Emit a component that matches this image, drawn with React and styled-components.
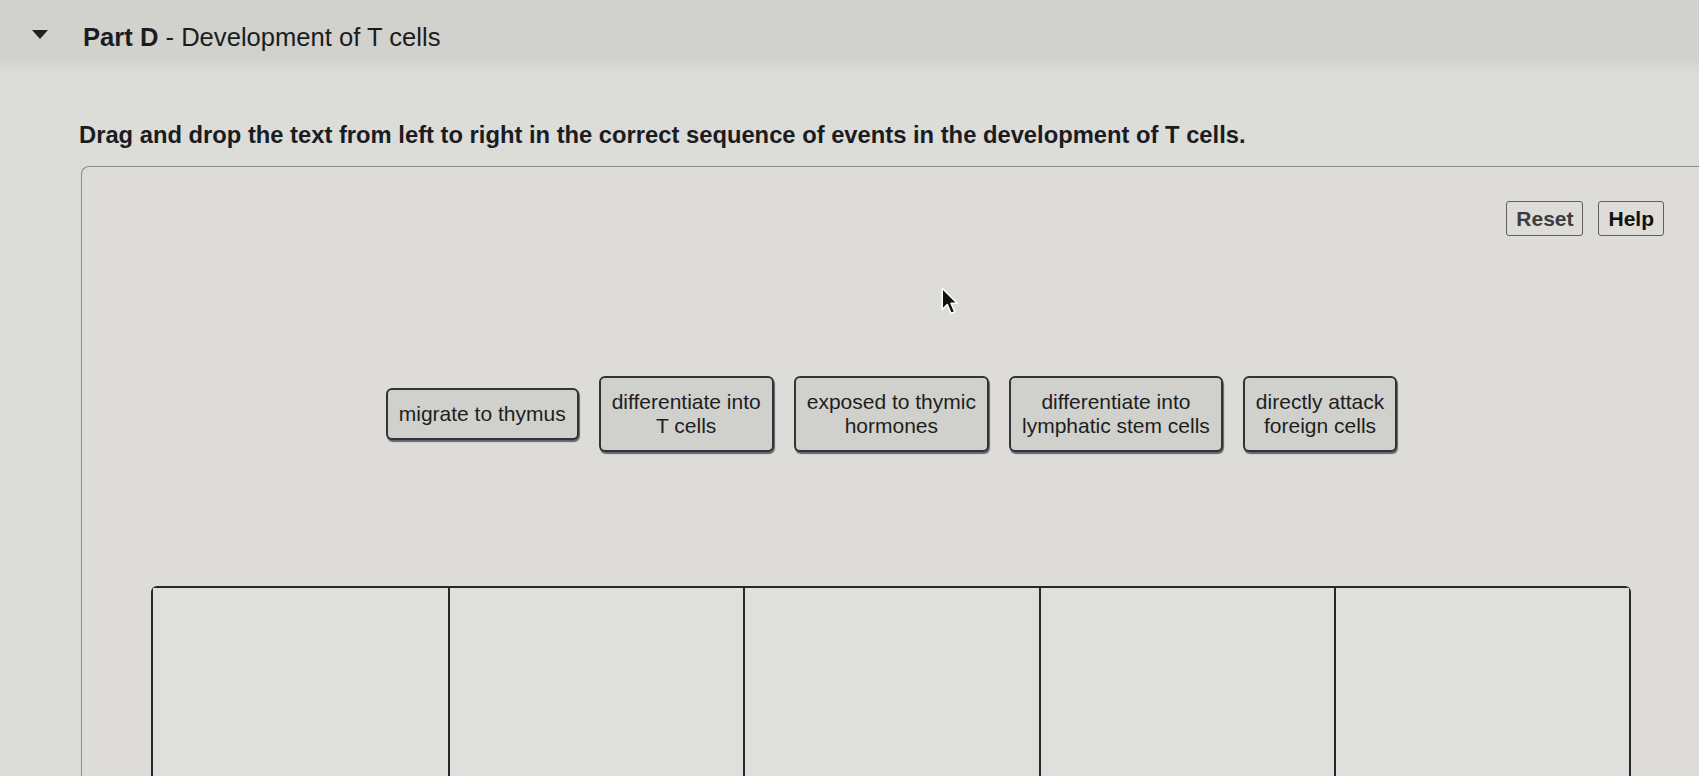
import React from 'react'
import styled, { createGlobalStyle } from 'styled-components'

const GlobalStyle = createGlobalStyle`
  html, body {
    margin: 0;
    padding: 0;
    overflow: hidden;
    background: #dcdcd8;
    font-family: "Liberation Sans", Arial, sans-serif;
  }
`

const Page = styled.div`
  width: 100%;
  min-height: 776px;
`

const PartHeader = styled.div`
  display: flex;
  align-items: center;
  height: 74px;
  padding-left: 32px;
  background: linear-gradient(to bottom, #d1d1cd 0%, #d1d1cd 80%, #dcdcd8 100%);
  box-sizing: border-box;
`

const Caret = styled.span`
  width: 0;
  height: 0;
  border-left: 8px solid transparent;
  border-right: 8px solid transparent;
  border-top: 9px solid #222;
  margin-right: 35px;
  margin-top: -6px;
`

const PartTitle = styled.h2`
  margin: 0;
  font-size: 25.6px;
  font-weight: 400;
  color: #1c1c1c;
  b {
    font-weight: 700;
  }
`

const Prompt = styled.p`
  margin: 47px 0 0 79px;
  font-size: 23.75px;
  line-height: 28px;
  font-weight: 700;
  color: #1b1b22;
`

const Panel = styled.div`
  position: relative;
  margin: 17px 0 0 81px;
  width: 1620px;
  border: 1.5px solid #8c8c8a;
  border-right: none;
  border-bottom: none;
  border-top-left-radius: 8px;
  padding: 34px 37px 0 0;
  box-sizing: border-box;
  background: #dddcd8;
`

const Toolbar = styled.div`
  display: flex;
  justify-content: flex-end;
  gap: 15px;
`

const ToolButton = styled.button`
  font-family: "Liberation Sans", Arial, sans-serif;
  font-size: 21px;
  font-weight: 700;
  line-height: 25px;
  padding: 4px 9px;
  background: transparent;
  border: 1.5px solid #5e5e5e;
  border-radius: 3px;
  color: ${p => (p.$strong ? '#111' : '#3c3c3c')};
`

const Pointer = styled.svg`
  position: absolute;
  left: 859px;
  top: 120px;
  width: 20px;
  height: 30px;
`

const TileRow = styled.div`
  display: flex;
  justify-content: center;
  align-items: center;
  gap: 20px;
  margin-top: 140px;
  padding-left: 37px;
`

const Tile = styled.div`
  font-size: 21px;
  line-height: 24px;
  color: #1e1e1e;
  text-align: center;
  background: #d0d0cc;
  border: 2px solid #33323b;
  border-radius: 6px;
  padding: 12px 11px 12px;
  box-shadow: 1px 2px 1px rgba(20, 20, 30, 0.6);
`

const DropTable = styled.div`
  display: grid;
  grid-template-columns: repeat(5, 1fr);
  width: 1480px;
  height: 200px;
  margin: 134px 0 0 69px;
  border: 2px solid #2a2630;
  border-bottom: none;
  border-radius: 6px 6px 0 0;
  box-sizing: border-box;
`

const DropCell = styled.div`
  border-left: ${p => (p.$first ? 'none' : '2px solid #2a2630')};
  background: #dfdfdb;
`

const tiles = [
  ['migrate to thymus'],
  ['differentiate into', 'T cells'],
  ['exposed to thymic', 'hormones'],
  ['differentiate into', 'lymphatic stem cells'],
  ['directly attack', 'foreign cells'],
]

export default function App() {
  return (
    <Page>
      <GlobalStyle />
      <PartHeader>
        <Caret />
        <PartTitle>
          <b>Part D</b> - Development of T cells
        </PartTitle>
      </PartHeader>
      <Prompt>
        Drag and drop the text from left to right in the correct sequence of events in the development of T cells.
      </Prompt>
      <Panel>
        <Toolbar>
          <ToolButton>Reset</ToolButton>
          <ToolButton $strong>Help</ToolButton>
        </Toolbar>
        <Pointer viewBox="0 0 16 24">
          <path d="M1 1 L1 18 L5 14 L8 21 L11 20 L8 13 L13 13 Z" fill="#111" stroke="#fff" strokeWidth="1.2" strokeLinejoin="round" />
        </Pointer>
        <TileRow>
          {tiles.map((lines, i) => (
            <Tile key={i}>
              {lines.map((l, j) => (
                <div key={j}>{l}</div>
              ))}
            </Tile>
          ))}
        </TileRow>
        <DropTable>
          {[0, 1, 2, 3, 4].map(i => (
            <DropCell key={i} $first={i === 0} />
          ))}
        </DropTable>
      </Panel>
    </Page>
  )
}
